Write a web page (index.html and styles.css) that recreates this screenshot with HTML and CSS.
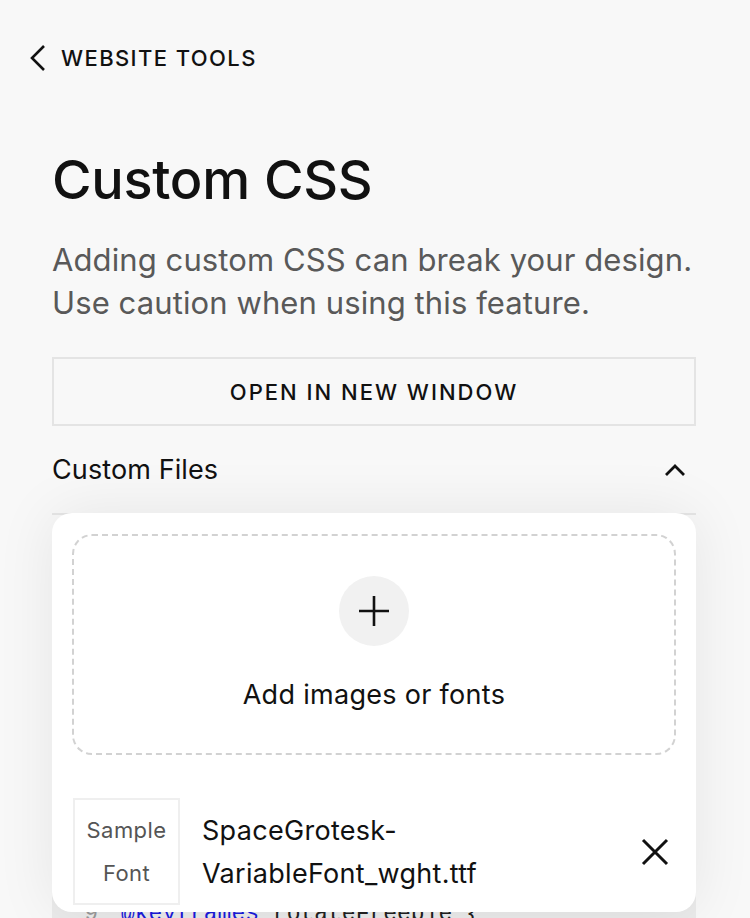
FILE: index.html
```html
<!DOCTYPE html>
<html>
<head>
<meta charset="utf-8">
<link rel="stylesheet" href="styles.css">
</head>
<body>
<div class="page">
  <header class="topbar">
    <svg class="back" width="18" height="28" viewBox="0 0 18 28"><path d="M15 2 L3 14 L15 26" fill="none" stroke="#111" stroke-width="2.6"/></svg>
    <span class="topbar-title">WEBSITE TOOLS</span>
  </header>
  <main class="content">
    <h1 class="title">Custom CSS</h1>
    <p class="lead">Adding custom CSS can break your design.<br>Use caution when using this feature.</p>
    <button class="open-btn">OPEN IN NEW WINDOW</button>
    <div class="section-head">
      <span class="section-title">Custom Files</span>
      <svg class="caret" width="22" height="14" viewBox="0 0 22 14"><path d="M2 12 L11 3 L20 12" fill="none" stroke="#111" stroke-width="2.8"/></svg>
    </div>
    <div class="editor-wrap">
      <div class="editor">
        <div class="code-line"><span class="ln">1</span><span class="code">.header {</span></div>
        <div class="code-line"><span class="ln">2</span><span class="code">  color: red;</span></div>
        <div class="code-line"><span class="ln">3</span><span class="code">}</span></div>
        <div class="code-line"><span class="ln">4</span><span class="code"></span></div>
        <div class="code-line"><span class="ln">5</span><span class="code"></span></div>
        <div class="code-line"><span class="ln">6</span><span class="code"></span></div>
        <div class="code-line"><span class="ln">7</span><span class="code"></span></div>
        <div class="code-line"><span class="ln">8</span><span class="code"></span></div>
        <div class="code-line"><span class="ln">9</span><span class="code"><span class="kw">@keyframes</span> rotateFreebie {</span></div>
      </div>
      <div class="files-card">
        <div class="dropzone">
          <div class="plus-circle">
            <svg width="34" height="34" viewBox="0 0 34 34"><path d="M17 2 V32 M2 17 H32" stroke="#111" stroke-width="2.6"/></svg>
          </div>
          <div class="drop-text">Add images or fonts</div>
        </div>
        <div class="file-row">
          <div class="thumb"><span>Sample</span><span>Font</span></div>
          <div class="file-name">SpaceGrotesk-<br>VariableFont_wght.ttf</div>
          <svg class="remove" width="28" height="28" viewBox="0 0 28 28"><path d="M2 2 L26 26 M26 2 L2 26" stroke="#111" stroke-width="3"/></svg>
        </div>
      </div>
    </div>
  </main>
</div>
</body>
</html>
```

FILE: styles.css
```css
* { box-sizing: border-box; }
html, body { margin: 0; padding: 0; }
body {
  background: #f8f8f8;
  font-family: Inter, "Noto Sans", sans-serif;
  color: #111;
  width: 750px;
  height: 918px;
  overflow: hidden;
}
.page { width: 750px; }
.topbar {
  display: flex;
  align-items: center;
  gap: 14px;
  padding: 44px 0 0 29px;
  height: 72px;
}
.topbar-title {
  font-size: 22px;
  font-weight: 500;
  letter-spacing: 1.4px;
}
.content { padding: 0 54px 0 52px; }
.title {
  margin: 76px 0 0 0;
  font-size: 54px;
  font-weight: 500;
  letter-spacing: -0.3px;
  line-height: 64px;
}
.lead {
  margin: 26px 0 0 0;
  font-size: 31px;
  line-height: 43px;
  color: #595959;
  letter-spacing: 0.1px;
}
.open-btn {
  display: block;
  width: 100%;
  height: 69px;
  margin-top: 33px;
  background: transparent;
  border: 2px solid #e4e4e4;
  font-family: inherit;
  font-size: 22px;
  font-weight: 500;
  letter-spacing: 2px;
  color: #111;
}
.section-head {
  display: flex;
  align-items: center;
  justify-content: space-between;
  height: 89px;
  border-bottom: 2px solid #e6e6e6;
  padding-right: 10px;
}
.section-title { font-size: 27px; letter-spacing: 0.1px; }
.editor-wrap { position: relative; padding-top: 30px; }
.editor {
  padding: 12px 0 0 0;
  background: #ebebeb;
  height: 373px;
  overflow: hidden;
  font-family: "Liberation Mono", monospace;
  font-size: 23px;
  color: #222;
}
.code-line { display: flex; height: 42px; align-items: center; }
.ln { width: 58px; color: #999; text-align: right; padding-right: 12px; margin-right: 11px; }
.code { white-space: pre; }
.kw { color: #1a1adb; }
.files-card {
  position: absolute;
  top: -2px;
  left: 0;
  right: 0;
  background: #fff;
  border-radius: 20px;
  padding: 21px 20px 7px 20px;
  box-shadow: 0 0 60px rgba(0,0,0,0.08);
}
.dropzone {
  height: 221px;
  border: 2px dashed #d2d2d2;
  border-radius: 20px;
  display: flex;
  flex-direction: column;
  align-items: center;
  padding-top: 40px;
}
.plus-circle {
  width: 70px;
  height: 70px;
  border-radius: 50%;
  background: #f1f1f1;
  display: flex;
  align-items: center;
  justify-content: center;
}
.drop-text {
  margin-top: 32px;
  font-size: 27px;
  letter-spacing: 0.3px;
}
.file-row {
  display: flex;
  align-items: center;
  margin-top: 43px;
  padding-right: 7px;
}
.thumb {
  width: 107px;
  height: 107px;
  border: 2px solid #efefef;
  display: flex;
  flex-direction: column;
  align-items: center;
  justify-content: center;
  gap: 10px;
  font-size: 22px;
  letter-spacing: 0.4px;
  color: #555;
  line-height: 33px;
  margin-left: 1px;
}
.file-name {
  flex: 1;
  margin-left: 22px;
  font-size: 27px;
  letter-spacing: 0.3px;
  line-height: 43px;
}
.remove { flex: none; }
```
